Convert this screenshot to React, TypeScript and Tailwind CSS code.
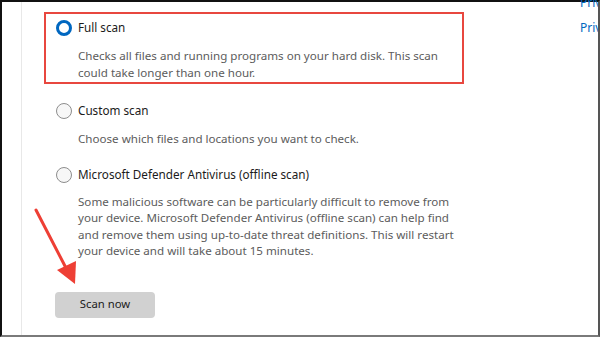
import type { ReactNode } from 'react'

const font = { fontFamily: '"Noto Sans", "Open Sans", Arial, sans-serif' }

function Radio({ checked }: { checked?: boolean }) {
  return checked ? (
    <span className="block h-[16px] w-[16px] shrink-0 rounded-full border-[3.5px] border-[#0067c0] bg-white" />
  ) : (
    <span className="block h-[16px] w-[16px] shrink-0 rounded-full border border-[#8d8d8d] bg-[#f7f7f7]" />
  )
}

function Option({ title, checked, tight, children }: { title: string; checked?: boolean; tight?: boolean; children: ReactNode }) {
  return (
    <div>
      <div className="flex h-[20px] items-center gap-[6px]">
        <Radio checked={checked} />
        <span className="text-[11.7px] text-[#1b1b1b]">{title}</span>
      </div>
      <p className={`mt-[9px] pl-[22px] text-[11.6px] text-[#5c5c5c] ${tight ? 'leading-[16.4px]' : 'leading-[17px]'}`}>
        {children}
      </p>
    </div>
  )
}

function Arrow() {
  return (
    <svg className="pointer-events-none absolute left-0 top-0" width="600" height="337" viewBox="0 0 600 337">
      <line x1="36" y1="210" x2="66" y2="268" stroke="#ee3f35" strokeWidth="3" strokeLinecap="round" />
      <polygon points="75,284 57,270 76,261" fill="#ee3f35" />
    </svg>
  )
}

export default function App() {
  return (
    <div className="relative h-[337px] w-[600px] overflow-hidden bg-white" style={font}>
      <div className="flex h-full border-2 border-b-[#7a7a7a] border-l-[#111] border-r-[#555] border-t-[#111]">
        <aside className="w-[20px] shrink-0 border-r border-[#e8e8e8]" />
        <main className="w-[558px] shrink-0 pt-[10px]">
          <div className="ml-[22px] w-[420px] border-2 border-[#e8473f] pb-[1px] pl-[10px] pt-[4px]">
            <Option title="Full scan" checked>
              Checks all files and running programs on your hard disk. This scan
              <br />
              could take longer than one hour.
            </Option>
          </div>
          <div className="ml-[34px] mt-[17px] flex flex-col gap-[18px]">
            <Option title="Custom scan">Choose which files and locations you want to check.</Option>
            <Option title="Microsoft Defender Antivirus (offline scan)" tight>
              Some malicious software can be particularly difficult to remove from
              <br />
              your device. Microsoft Defender Antivirus (offline scan) can help find
              <br />
              and remove them using up-to-date threat definitions. This will restart
              <br />
              your device and will take about 15 minutes.
            </Option>
          </div>
          <button className="ml-[33px] mt-[32px] h-[26px] w-[100px] rounded-[4px] bg-[#d1d1d1] text-[11.3px] text-[#1b1b1b]">
            Scan now
          </button>
        </main>
        <div className="-mt-[12px] flex-1 overflow-hidden whitespace-nowrap text-[12px] leading-[25px] text-[#0067c0]">
          <p>Privacy settings</p>
          <p>Privacy dashboard</p>
        </div>
      </div>
      <Arrow />
    </div>
  )
}
